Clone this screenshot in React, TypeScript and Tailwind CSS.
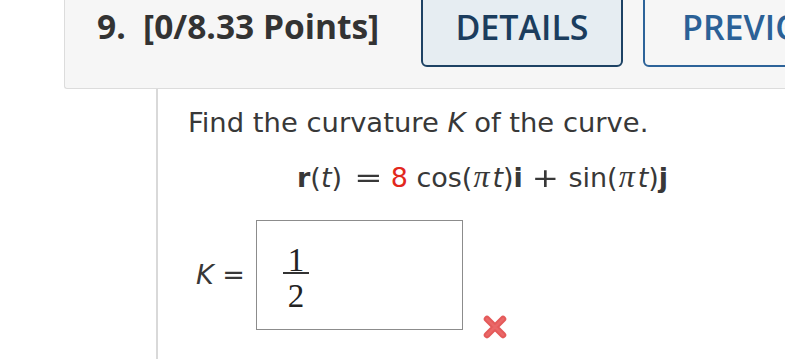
import React from "react";

const sans = { fontFamily: '"DejaVu Sans", Verdana, sans-serif' };

function Pi() {
  return (
    <span
      className="italic text-[32px] leading-[0] ml-[1px] mr-[3px]"
      style={{ fontFamily: '"Liberation Serif", "DejaVu Serif", serif' }}
    >
      π
    </span>
  );
}

function XMark() {
  return (
    <svg width="26" height="26" viewBox="0 0 26 26" className="block">
      <defs>
        <filter id="b" x="-20%" y="-20%" width="140%" height="140%">
          <feGaussianBlur stdDeviation="0.6" />
        </filter>
      </defs>
      <g filter="url(#b)" strokeLinecap="round">
        <path d="M5 5 L21 21 M21 5 L5 21" stroke="#e45a5a" strokeWidth="6.5" />
        <path d="M5 5 L21 21 M21 5 L5 21" stroke="#ee7070" strokeWidth="2.5" opacity="0.6" />
      </g>
    </svg>
  );
}

export default function App() {
  return (
    <div className="w-[785px] h-[359px] overflow-hidden bg-white relative">
      {/* header */}
      <div className="flex pl-[64px]">
        <div className="flex-1 h-[89px] bg-[#f6f6f6] border-l border-b border-[#dcdcdc] rounded-bl-[3px] flex items-start pl-[32px] overflow-hidden">
          <div
            className="w-[324px] shrink-0 pt-[6px] text-[33.5px] leading-[40px] font-bold text-[#333333] whitespace-nowrap"
            style={{ fontFamily: '"Open Sans", sans-serif' }}
          >
            9.&nbsp;&nbsp;[0/8.33 Points]
          </div>
          <div
            className="shrink-0 w-[202px] h-[79px] -mt-[12px] border-2 border-[#1d4264] rounded-[6px] bg-[#e6edf2] flex justify-center pt-[17px] text-[34px] leading-[40px] font-semibold text-[#1b3d5e]"
            style={{ fontFamily: '"Open Sans", sans-serif' }}
          >
            DETAILS
          </div>
          <div
            className="shrink-0 ml-[20px] w-[240px] h-[79px] -mt-[12px] border-2 border-[#2d6399] rounded-[6px] bg-[#f6f6f6] pl-[37px] pt-[17px] text-[34px] leading-[40px] font-semibold text-[#2b6197] whitespace-nowrap"
            style={{ fontFamily: '"Open Sans", sans-serif' }}
          >
            PREVIOUS
          </div>
        </div>
      </div>

      {/* body */}
      <div className="ml-[156px] border-l-2 border-[#d9d9d9] h-[270px] pl-[30px] pt-[16px] text-[#383838]" style={sans}>
        <div className="text-[27.4px] leading-[36px] whitespace-nowrap">
          Find the curvature <span className="italic">K</span> of the curve.
        </div>
        <div className="mt-[19px] ml-[109px] h-[36px] text-[27px] leading-[36px] whitespace-nowrap">
          <span className="font-bold">r</span>(<span className="italic">t</span>)
          <span className="inline-block scale-x-[1.25] ml-[15px] mr-[11px]">=</span>
          <span className="text-[#e2281c]">8</span> cos(<Pi />
          <span className="italic">t</span>)<span className="font-bold">i</span>
          <span className="inline-block scale-x-[1.2] ml-[11px] mr-[12px]">+</span>
          sin(<Pi />
          <span className="italic">t</span>)<span className="font-bold">j</span>
        </div>
        <div className="mt-[24px] flex items-start">
          <div className="pl-[8px] w-[68px] h-[110px] flex items-center text-[27px] leading-[36px] whitespace-nowrap">
            <span className="italic">K</span>&nbsp;=
          </div>
          <div className="w-[207px] h-[110px] border border-[#8c8c8c] pl-[26px] pt-[27px]">
            <div
              className="inline-flex flex-col items-center w-[26px] text-[33px] text-[#222]"
              style={{ fontFamily: '"Liberation Serif", "DejaVu Serif", serif' }}
            >
              <div className="leading-[24px]">1</div>
              <div className="w-full h-[1.5px] bg-[#333]" />
              <div className="leading-[24px] mt-[10px]">2</div>
            </div>
          </div>
          <div className="ml-[19px] mt-[94px]">
            <XMark />
          </div>
        </div>
      </div>
    </div>
  );
}
